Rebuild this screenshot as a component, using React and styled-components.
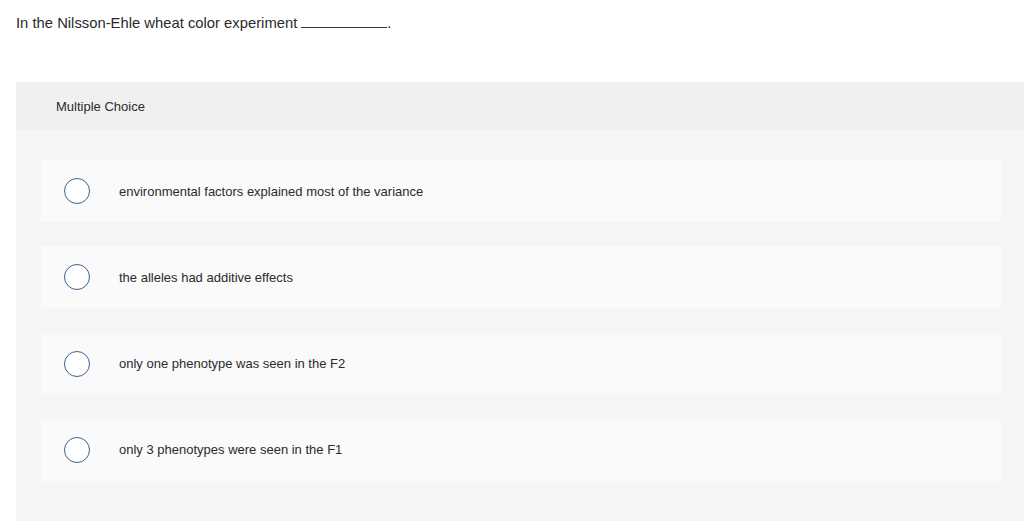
import React from 'react'
import styled, { createGlobalStyle } from 'styled-components'

const GlobalStyle = createGlobalStyle`
  html, body {
    margin: 0;
    padding: 0;
    background: #ffffff;
    font-family: 'Liberation Sans', Arial, sans-serif;
    color: #333333;
  }
`

const choices = [
  'environmental factors explained most of the variance',
  'the alleles had additive effects',
  'only one phenotype was seen in the F2',
  'only 3 phenotypes were seen in the F1',
]

const Page = styled.div`
  padding: 14px 0 0 16px;
  height: 521px;
  box-sizing: border-box;
  overflow: hidden;
`

const Question = styled.p`
  margin: 0;
  font-size: 14.8px;
  line-height: 19px;
  color: #2b2b2b;
`

const Blank = styled.span`
  display: inline-block;
  width: 86px;
  border-bottom: 1px solid #333;
  margin-left: 4px;
  vertical-align: baseline;
  height: 12px;
`

const Panel = styled.section`
  margin-top: 49px;
`

const PanelHeader = styled.div`
  background: #f0f0f0;
  height: 48px;
  display: flex;
  align-items: center;
  padding-left: 40px;
  font-size: 13px;
  color: #2b2b2b;
`

const PanelBody = styled.div`
  background: #f5f5f5;
  padding: 30px 23px 40px 25px;
  display: flex;
  flex-direction: column;
  gap: 24.3px;
`

const Choice = styled.label`
  background: #fafafa;
  height: 62px;
  display: flex;
  align-items: center;
  padding-left: 23px;
  cursor: pointer;
`

const Radio = styled.span`
  width: 24px;
  height: 24px;
  border: 1.3px solid #3a6193;
  border-radius: 50%;
  background: #ffffff;
  flex: none;
`

const ChoiceText = styled.span`
  margin-left: 29px;
  font-size: 13px;
  color: #2b2b2b;
`

export default function App() {
  return (
    <>
      <GlobalStyle />
      <Page>
        <Question>
          In the Nilsson-Ehle wheat color experiment<Blank />.
        </Question>
        <Panel>
          <PanelHeader>Multiple Choice</PanelHeader>
          <PanelBody>
            {choices.map((c) => (
              <Choice key={c}>
                <Radio />
                <ChoiceText>{c}</ChoiceText>
              </Choice>
            ))}
          </PanelBody>
        </Panel>
      </Page>
    </>
  )
}
